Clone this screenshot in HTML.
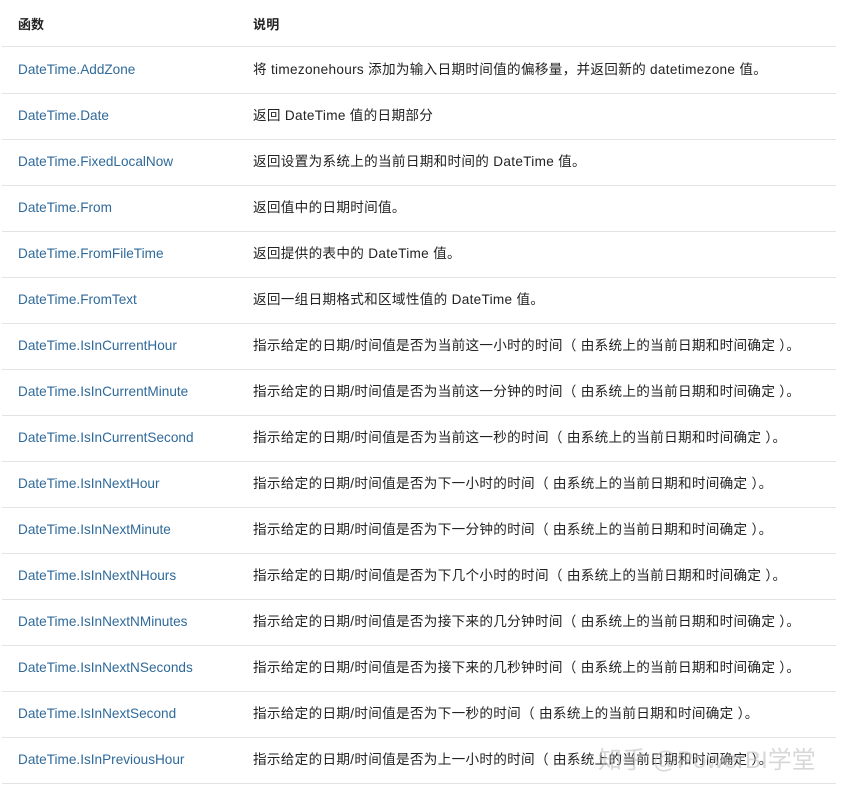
<!DOCTYPE html>
<html><head><meta charset="utf-8"><style>
body{margin:0;background:#fff;width:841px;height:787px;overflow:hidden;position:relative;font-family:"Liberation Sans","Noto Sans CJK SC",sans-serif;font-size:13.6px;color:#222}
.r{position:absolute;left:2px;width:834px;height:46px;border-bottom:1px solid #e3e3e3}
.r span{position:absolute;top:0;height:46px;line-height:46px;white-space:nowrap}
.a{left:16px;color:#2f6a9a}
.b{left:251px;letter-spacing:0.3px}
.h{top:0;height:46px}
.h span{top:2px;font-weight:bold;color:#222;font-size:13px}
.wm{position:absolute;left:598px;top:740px;font-size:24px;color:rgba(190,190,190,.6);font-family:"Liberation Sans","Noto Sans CJK SC",sans-serif;white-space:nowrap}
</style></head><body>
<div class="r h"><span class="a" style="color:#222">函数</span><span class="b">说明</span></div>
<div class="r" style="top:47px"><span class="a">DateTime.AddZone</span><span class="b">将 timezonehours 添加为输入日期时间值的偏移量，并返回新的 datetimezone 值。</span></div>
<div class="r" style="top:93px"><span class="a">DateTime.Date</span><span class="b">返回 DateTime 值的日期部分</span></div>
<div class="r" style="top:139px"><span class="a">DateTime.FixedLocalNow</span><span class="b">返回设置为系统上的当前日期和时间的 DateTime 值。</span></div>
<div class="r" style="top:185px"><span class="a">DateTime.From</span><span class="b">返回值中的日期时间值。</span></div>
<div class="r" style="top:231px"><span class="a">DateTime.FromFileTime</span><span class="b">返回提供的表中的 DateTime 值。</span></div>
<div class="r" style="top:277px"><span class="a">DateTime.FromText</span><span class="b">返回一组日期格式和区域性值的 DateTime 值。</span></div>
<div class="r" style="top:323px"><span class="a">DateTime.IsInCurrentHour</span><span class="b">指示给定的日期/时间值是否为当前这一小时的时间（ 由系统上的当前日期和时间确定 ）。</span></div>
<div class="r" style="top:369px"><span class="a">DateTime.IsInCurrentMinute</span><span class="b">指示给定的日期/时间值是否为当前这一分钟的时间（ 由系统上的当前日期和时间确定 ）。</span></div>
<div class="r" style="top:415px"><span class="a">DateTime.IsInCurrentSecond</span><span class="b">指示给定的日期/时间值是否为当前这一秒的时间（ 由系统上的当前日期和时间确定 ）。</span></div>
<div class="r" style="top:461px"><span class="a">DateTime.IsInNextHour</span><span class="b">指示给定的日期/时间值是否为下一小时的时间（ 由系统上的当前日期和时间确定 ）。</span></div>
<div class="r" style="top:507px"><span class="a">DateTime.IsInNextMinute</span><span class="b">指示给定的日期/时间值是否为下一分钟的时间（ 由系统上的当前日期和时间确定 ）。</span></div>
<div class="r" style="top:553px"><span class="a">DateTime.IsInNextNHours</span><span class="b">指示给定的日期/时间值是否为下几个小时的时间（ 由系统上的当前日期和时间确定 ）。</span></div>
<div class="r" style="top:599px"><span class="a">DateTime.IsInNextNMinutes</span><span class="b">指示给定的日期/时间值是否为接下来的几分钟时间（ 由系统上的当前日期和时间确定 ）。</span></div>
<div class="r" style="top:645px"><span class="a">DateTime.IsInNextNSeconds</span><span class="b">指示给定的日期/时间值是否为接下来的几秒钟时间（ 由系统上的当前日期和时间确定 ）。</span></div>
<div class="r" style="top:691px"><span class="a">DateTime.IsInNextSecond</span><span class="b">指示给定的日期/时间值是否为下一秒的时间（ 由系统上的当前日期和时间确定 ）。</span></div>
<div class="r" style="top:737px"><span class="a">DateTime.IsInPreviousHour</span><span class="b">指示给定的日期/时间值是否为上一小时的时间（ 由系统上的当前日期和时间确定 ）。</span></div>
<div class="wm">知乎 @PowerBI学堂</div>
</body></html>
